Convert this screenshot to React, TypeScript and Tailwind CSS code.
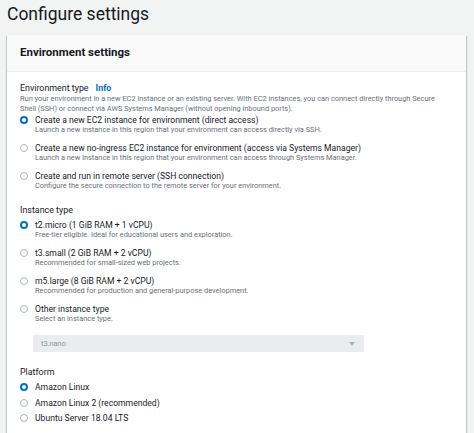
import React from "react";

type Option = {
  label: string;
  description?: string;
  checked?: boolean;
};

const environmentOptions: Option[] = [
  {
    label: "Create a new EC2 instance for environment (direct access)",
    description: "Launch a new instance in this region that your environment can access directly via SSH.",
    checked: true,
  },
  {
    label: "Create a new no-ingress EC2 instance for environment (access via Systems Manager)",
    description: "Launch a new instance in this region that your environment can access through Systems Manager.",
  },
  {
    label: "Create and run in remote server (SSH connection)",
    description: "Configure the secure connection to the remote server for your environment.",
  },
];

const instanceOptions: Option[] = [
  {
    label: "t2.micro (1 GiB RAM + 1 vCPU)",
    description: "Free-tier eligible. Ideal for educational users and exploration.",
    checked: true,
  },
  { label: "t3.small (2 GiB RAM + 2 vCPU)", description: "Recommended for small-sized web projects." },
  {
    label: "m5.large (8 GiB RAM + 2 vCPU)",
    description: "Recommended for production and general-purpose development.",
  },
  { label: "Other instance type", description: "Select an instance type." },
];

const platformOptions: Option[] = [
  { label: "Amazon Linux", checked: true },
  { label: "Amazon Linux 2 (recommended)" },
  { label: "Ubuntu Server 18.04 LTS" },
];

function Radio({ checked }: { checked?: boolean }) {
  return checked ? (
    <span className="block h-[8px] w-[8px] shrink-0 rounded-full border-[2.5px] border-[#0073bb] bg-white" />
  ) : (
    <span className="block h-[8px] w-[8px] shrink-0 rounded-full border border-[#aab7b8] bg-white" />
  );
}

function RadioRow({ option }: { option: Option }) {
  return (
    <div className="flex gap-[7px]">
      <div className="flex h-[10px] items-center">
        <Radio checked={option.checked} />
      </div>
      <div>
        <div className="text-[8.6px] leading-[10px] text-[#16191f]">{option.label}</div>
        {option.description ? (
          <div className="text-[7.4px] leading-[9.5px] text-[#687078]">{option.description}</div>
        ) : null}
      </div>
    </div>
  );
}

function FieldLabel({ children }: { children: React.ReactNode }) {
  return <div className="text-[8.9px] leading-[12px] text-[#16191f]">{children}</div>;
}

export default function App() {
  return (
    <div className="min-h-screen bg-[#f2f3f3] pl-[7px] pr-[8px] font-['Roboto',sans-serif]">
      <h1 className="h-[35px] pt-[3px] text-[17.5px] leading-[22px] font-normal text-[#16191f]">
        Configure settings
      </h1>

      <div className="w-[459px] bg-white shadow-[0_1px_1px_0_rgba(0,28,36,0.3),1px_1px_1px_0_rgba(0,28,36,0.15),-1px_1px_1px_0_rgba(0,28,36,0.15)]">
        <div className="flex h-[37px] items-center border-b border-[#eaeded] bg-[#fafafa] px-[13px]">
          <h2 className="text-[11.5px] font-bold text-[#16191f]">Environment settings</h2>
        </div>

        <div className="px-[13px] pt-[10px] pb-[20px]">
          <div className="flex items-baseline gap-[7px]">
            <FieldLabel>Environment type</FieldLabel>
            <span className="text-[8.9px] leading-[12px] font-bold text-[#0073bb]">Info</span>
          </div>
          <p className="max-w-[424px] text-[7.4px] leading-[9.5px] text-[#687078]">
            Run your environment in a new EC2 instance or an existing server. With EC2 instances, you can connect directly
            through Secure Shell (SSH) or connect via AWS Systems Manager (without opening inbound ports).
          </p>
          <div className="mt-[2px] flex flex-col gap-[8.5px]">
            {environmentOptions.map((o) => (
              <RadioRow key={o.label} option={o} />
            ))}
          </div>

          <div className="mt-[13.5px]">
            <FieldLabel>Instance type</FieldLabel>
          </div>
          <div className="mt-[3.5px] flex flex-col gap-[8.5px]">
            {instanceOptions.map((o) => (
              <RadioRow key={o.label} option={o} />
            ))}
          </div>

          <div className="mt-[12px] ml-[13px] flex h-[17px] w-[331px] items-center justify-between bg-[#eaeded] pl-[8px] pr-[9px]">
            <span className="text-[7.4px] text-[#879596]">t3.nano</span>
            <svg width="6" height="4" viewBox="0 0 6 4">
              <polygon points="0,0 6,0 3,4" fill="#aab7b8" />
            </svg>
          </div>

          <div className="mt-[13.5px]">
            <FieldLabel>Platform</FieldLabel>
          </div>
          <div className="mt-[4.5px] flex flex-col gap-[5.5px]">
            {platformOptions.map((o) => (
              <RadioRow key={o.label} option={o} />
            ))}
          </div>
        </div>
      </div>
    </div>
  );
}
